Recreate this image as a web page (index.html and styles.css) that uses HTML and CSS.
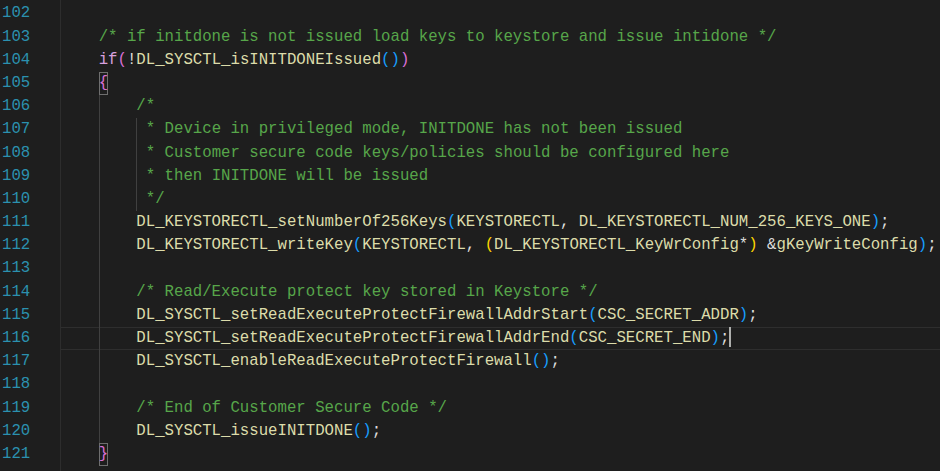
FILE: index.html
```html
<!DOCTYPE html>
<html>
<head>
<meta charset="utf-8">
<link rel="stylesheet" href="styles.css">
</head>
<body>
<div class="editor">
  <div class="row"><span class="num">102</span><span class="code"></span></div>
  <div class="row"><span class="num">103</span><span class="code"><span class="ind">    </span><span class="c">/* if initdone is not issued load keys to keystore and issue intidone */</span></span></div>
  <div class="row"><span class="num">104</span><span class="code"><span class="ind">    </span><span class="k">if</span><span class="b2">(</span><span class="p">!</span><span class="f">DL_SYSCTL_isINITDONEIssued</span><span class="b3">()</span><span class="b2">)</span></span></div>
  <div class="row"><span class="num">105</span><span class="code"><span class="ind">    </span><span class="match b2">{</span></span></div>
  <div class="row"><span class="num">106</span><span class="code"><span class="ind">    </span><span class="ind g">    </span><span class="c">/*</span></span></div>
  <div class="row"><span class="num">107</span><span class="code"><span class="ind">    </span><span class="ind g">    </span><span class="ind g"> </span><span class="c">* Device in privileged mode, INITDONE has not been issued</span></span></div>
  <div class="row"><span class="num">108</span><span class="code"><span class="ind">    </span><span class="ind g">    </span><span class="ind g"> </span><span class="c">* Customer secure code keys/policies should be configured here</span></span></div>
  <div class="row"><span class="num">109</span><span class="code"><span class="ind">    </span><span class="ind g">    </span><span class="ind g"> </span><span class="c">* then INITDONE will be issued</span></span></div>
  <div class="row"><span class="num">110</span><span class="code"><span class="ind">    </span><span class="ind g">    </span><span class="ind g"> </span><span class="c">*/</span></span></div>
  <div class="row"><span class="num">111</span><span class="code"><span class="ind">    </span><span class="ind g">    </span><span class="f">DL_KEYSTORECTL_setNumberOf256Keys</span><span class="b3">(</span><span class="f">KEYSTORECTL</span><span class="p">, </span><span class="f">DL_KEYSTORECTL_NUM_256_KEYS_ONE</span><span class="b3">)</span><span class="p">;</span></span></div>
  <div class="row"><span class="num">112</span><span class="code"><span class="ind">    </span><span class="ind g">    </span><span class="f">DL_KEYSTORECTL_writeKey</span><span class="b3">(</span><span class="f">KEYSTORECTL</span><span class="p">, </span><span class="b1">(</span><span class="f">DL_KEYSTORECTL_KeyWrConfig</span><span class="p">*</span><span class="b1">)</span><span class="p"> &amp;</span><span class="f">gKeyWriteConfig</span><span class="b3">)</span><span class="p">;</span></span></div>
  <div class="row"><span class="num">113</span><span class="code"><span class="ind">    </span><span class="ind g">    </span></span></div>
  <div class="row"><span class="num">114</span><span class="code"><span class="ind">    </span><span class="ind g">    </span><span class="c">/* Read/Execute protect key stored in Keystore */</span></span></div>
  <div class="row"><span class="num">115</span><span class="code"><span class="ind">    </span><span class="ind g">    </span><span class="f">DL_SYSCTL_setReadExecuteProtectFirewallAddrStart</span><span class="b3">(</span><span class="f">CSC_SECRET_ADDR</span><span class="b3">)</span><span class="p">;</span></span></div>
  <div class="row"><span class="num">116</span><span class="code current"><span class="ind">    </span><span class="ind g">    </span><span class="f">DL_SYSCTL_setReadExecuteProtectFirewallAddrEnd</span><span class="b3">(</span><span class="f">CSC_SECRET_END</span><span class="b3">)</span><span class="p">;</span><span class="cursor"></span></span></div>
  <div class="row"><span class="num">117</span><span class="code"><span class="ind">    </span><span class="ind g">    </span><span class="f">DL_SYSCTL_enableReadExecuteProtectFirewall</span><span class="b3">()</span><span class="p">;</span></span></div>
  <div class="row"><span class="num">118</span><span class="code"><span class="ind">    </span><span class="ind g">    </span></span></div>
  <div class="row"><span class="num">119</span><span class="code"><span class="ind">    </span><span class="ind g">    </span><span class="c">/* End of Customer Secure Code */</span></span></div>
  <div class="row"><span class="num">120</span><span class="code"><span class="ind">    </span><span class="ind g">    </span><span class="f">DL_SYSCTL_issueINITDONE</span><span class="b3">()</span><span class="p">;</span></span></div>
  <div class="row"><span class="num">121</span><span class="code"><span class="ind">    </span><span class="match b2">}</span></span></div>
</div>
</body>
</html>
```
FILE: styles.css
```css
html, body {
  margin: 0;
  padding: 0;
  background: #1e1e1e;
}
.editor {
  width: 940px;
  height: 471px;
  overflow: hidden;
  padding-top: 2.4px;
  box-sizing: border-box;
  font-family: "Liberation Mono", "DejaVu Sans Mono", monospace;
  font-size: 15.7px;
  line-height: 23.2px;
  color: #dcdcdc;
  background: linear-gradient(#2d2d2d, #2d2d2d) no-repeat 60px 0 / 1px 100%, #1e1e1e;
}
.row {
  display: flex;
  height: 23.2px;
}
.num {
  width: 61px;
  flex: none;
  box-sizing: border-box;
  padding-left: 2px;
  color: #2b91af;
}
.code {
  flex: 1;
  white-space: pre;
}
.current {
  box-shadow: inset 0 1px #2e2e2e, inset 0 -1px #2e2e2e;
}
.ind {
  display: inline-block;
  height: 23.2px;
  vertical-align: top;
  white-space: pre;
}
.g {
  background: linear-gradient(#404040, #404040) no-repeat 0 0 / 1px 100%;
}
.c { color: #57a64a; }
.k { color: #d8a0df; }
.f { color: #dcdcaa; }
.p { color: #dcdcdc; }
.b1 { color: #ffd700; }
.b2 { color: #da70d6; }
.b3 { color: #179fff; }
.match {
  display: inline-block;
  height: 23.2px;
  vertical-align: top;
  box-shadow: inset 0 0 0 1px #6e6e6e;
}
.cursor {
  display: inline-block;
  width: 2px;
  height: 20px;
  margin-right: -2px;
  vertical-align: -5px;
  background: #aeafad;
}
```
